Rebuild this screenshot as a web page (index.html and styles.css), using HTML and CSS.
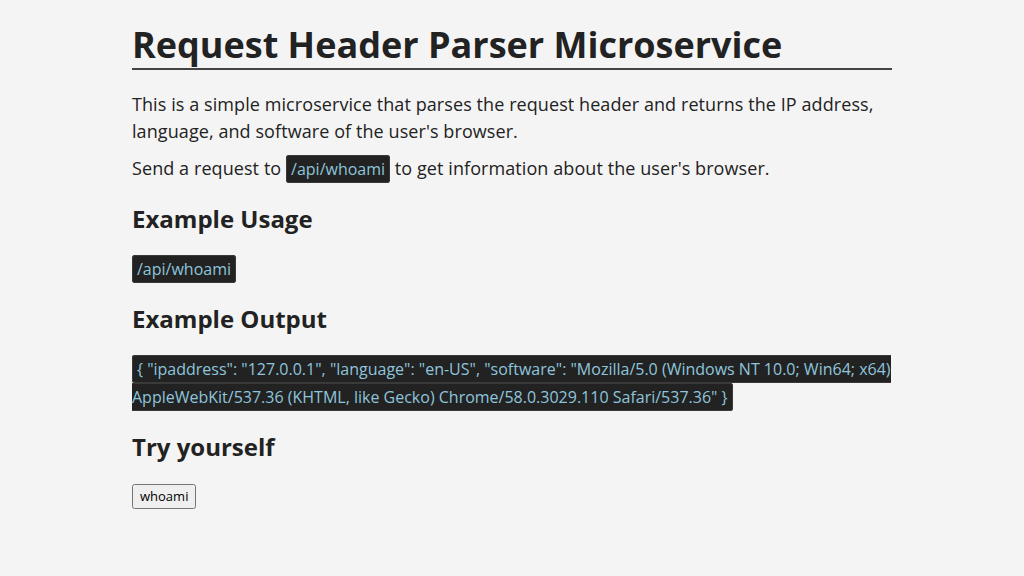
FILE: index.html
```html
<!DOCTYPE html>
<html>
<head>
<meta charset="utf-8">
<link rel="stylesheet" href="styles.css">
<title>Request Header Parser Microservice</title>
</head>
<body>
<div class="container">
  <h1 class="title">Request Header Parser Microservice</h1>
  <p class="text">This is a simple microservice that parses the request header and returns the IP address, language, and software of the user's browser.</p>
  <p class="text">Send a request to <code class="code">/api/whoami</code> to get information about the user's browser.</p>
  <h2 class="subtitle">Example Usage</h2>
  <p class="text"><code class="code">/api/whoami</code></p>
  <h2 class="subtitle">Example Output</h2>
  <p class="text"><code class="code">{ "ipaddress": "127.0.0.1", "language": "en-US", "software": "Mozilla/5.0 (Windows NT 10.0; Win64; x64) AppleWebKit/537.36 (KHTML, like Gecko) Chrome/58.0.3029.110 Safari/537.36" }</code></p>
  <h2 class="subtitle">Try yourself</h2>
  <button class="btn">whoami</button>
</div>
</body>
</html>
```
FILE: styles.css
```css
html, body {
  margin: 0;
  padding: 0;
  background: #f4f4f4;
  color: #222;
  font-family: "Open Sans", sans-serif;
}
.container {
  width: 760px;
  margin: 0 auto;
  padding-top: 22px;
}
.title {
  font-size: 36px;
  font-weight: 700;
  margin: 0 0 21px;
  line-height: 46px;
  border-bottom: 2px solid #444;
}
.text {
  font-size: 18px;
  line-height: 27px;
  letter-spacing: 0.08px;
  margin: 0 0 10px;
}
.code {
  font-family: "Open Sans", sans-serif;
  font-size: 16px;
  letter-spacing: 0;
  background: #222;
  color: #8ec5dc;
  padding: 2px 4px;
  border: 1px solid #3a3a3a;
  border-radius: 3px;
}
.subtitle {
  font-size: 24px;
  font-weight: 700;
  margin: 19px 0 20px;
}
.btn {
  font-family: "Open Sans", sans-serif;
  font-size: 13px;
  line-height: 17px;
  padding: 2px 6px;
  margin-top: 1px;
}
```
